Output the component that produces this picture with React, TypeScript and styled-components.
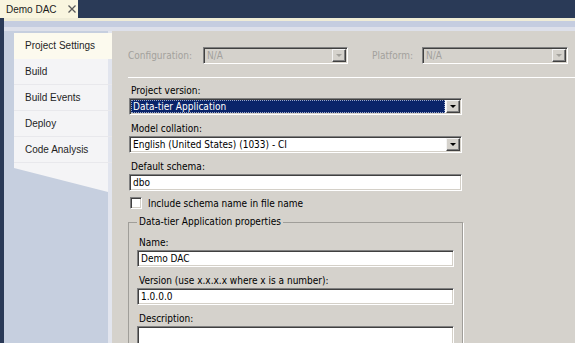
import styled, { createGlobalStyle } from "styled-components";

const GlobalStyle = createGlobalStyle`
  html, body {
    margin: 0;
    padding: 0;
    background: #2a3a57;
  }
`;

const sunken = `
  box-sizing: border-box;
  border: 1px solid;
  border-color: #808080 #ffffff #ffffff #808080;
  box-shadow: inset 1px 1px 0 #404040, inset -1px -1px 0 #d4d0c8;
`;

const Window = styled.div`
  width: 575px;
  height: 343px;
  overflow: hidden;
  display: flex;
  flex-direction: column;
  background: #2a3a57;
  font-family: Tahoma, "DejaVu Sans Condensed", "Liberation Sans", sans-serif;
  font-size: 10px;
  color: #000;
`;

const TabStrip = styled.div`
  height: 18px;
  flex-shrink: 0;
  display: flex;
`;

const DocTab = styled.div`
  width: 78px;
  box-sizing: border-box;
  display: flex;
  align-items: center;
  gap: 11px;
  padding-left: 6px;
  white-space: nowrap;
  background: #f9f5df;
  color: #1b1b1b;
  font-family: "Liberation Sans", sans-serif;
  font-size: 10px;
`;

const DocFrame = styled.div`
  flex: 1;
  min-height: 0;
  margin-left: 4px;
  display: flex;
  flex-direction: column;
`;

const Band = styled.div`
  height: 13px;
  flex-shrink: 0;
  background: linear-gradient(
    to bottom,
    #efecd7 0 3px,
    #c5cde0 3px 9px,
    #dde0ea 9px 13px
  );
`;

const Body = styled.div`
  flex: 1;
  min-height: 0;
  display: flex;
`;

const LeftPane = styled.div`
  width: 108px;
  flex-shrink: 0;
  box-sizing: border-box;
  padding: 2px 0 0 10px;
  background: linear-gradient(to right, #c6cfdf 104px, #e2e5ee 104px);
`;

const TabList = styled.ul`
  list-style: none;
  margin: 0;
  padding: 0;
  height: 160px;
  display: flex;
  flex-direction: column;
  clip-path: polygon(0 0, 100% 0, 100% 100%, 0 135px);
  background: linear-gradient(to right, #f4f4f6 94px, #e2e5ee 94px);
`;

const TabItem = styled.li<{ $active?: boolean }>`
  height: 26px;
  box-sizing: border-box;
  display: flex;
  align-items: center;
  padding-left: 11px;
  font-family: "Liberation Sans", sans-serif;
  font-size: 10px;
  color: #1e1e1e;
  border-bottom: 1px solid ${(p) => (p.$active ? "transparent" : "#e8e8ec")};
  background: ${(p) =>
    p.$active
      ? "#fcfaee"
      : "linear-gradient(to right, #f4f4f6 94px, #e2e5ee 94px)"};
`;

const Content = styled.div`
  flex: 1;
  background: #d5d2cc;
  box-sizing: border-box;
  padding: 16px 0 0 16px;
  display: flex;
  flex-direction: column;
`;

const ConfigRow = styled.div`
  height: 17px;
  display: flex;
  align-items: center;
`;

const ConfigLabel = styled.span<{ $w: number; $ml?: number }>`
  width: ${(p) => p.$w}px;
  margin-left: ${(p) => p.$ml ?? 0}px;
  color: #a3a19c;
`;

const Separator = styled.div`
  margin: 13px 0 4px 0;
  height: 1px;
  background: #a09e99;
  border-bottom: 1px solid #ffffff;
`;

const Form = styled.div`
  width: 333px;
  margin-left: 1px;
  display: flex;
  flex-direction: column;
`;

const Field = styled.div`
  display: flex;
  flex-direction: column;
  margin-bottom: 5px;
`;

const FieldLabel = styled.div`
  height: 16px;
  line-height: 17px;
  padding-left: 2px;
`;

const Combo = styled.div<{ $w?: number; $disabled?: boolean }>`
  ${sunken}
  width: ${(p) => (p.$w ? `${p.$w}px` : "100%")};
  height: 17px;
  padding: 1px;
  display: flex;
  background: ${(p) => (p.$disabled ? "#d5d2cc" : "#ffffff")};
  color: ${(p) => (p.$disabled ? "#a3a19c" : "#000")};
`;

const ComboValue = styled.div<{ $selected?: boolean }>`
  flex: 1;
  display: flex;
  align-items: center;
  padding-left: 2px;
  margin-right: 1px;
  white-space: nowrap;
  overflow: hidden;
  background: ${(p) => (p.$selected ? "#0a246a" : "transparent")};
  color: ${(p) => (p.$selected ? "#ffffff" : "inherit")};
  outline: ${(p) => (p.$selected ? "1px dotted #9aa6c8" : "none")};
  outline-offset: -1px;
`;

const DropButton = styled.div<{ $disabled?: boolean }>`
  width: 14px;
  box-sizing: border-box;
  display: flex;
  align-items: center;
  justify-content: center;
  background: #d5d2cc;
  border: 1px solid;
  border-color: #f4f4f4 #404040 #404040 #f4f4f4;
  box-shadow: inset -1px -1px 0 #808080;

  &::after {
    content: "";
    border-left: 3px solid transparent;
    border-right: 3px solid transparent;
    border-top: 3px solid ${(p) => (p.$disabled ? "#a3a19c" : "#000")};
  }
`;

const TextBox = styled.div<{ $h?: number }>`
  ${sunken}
  height: ${(p) => p.$h ?? 17}px;
  background: #ffffff;
  padding: 0 3px;
  display: flex;
  align-items: ${(p) => (p.$h ? "flex-start" : "center")};
`;

const CheckRow = styled.label`
  margin-top: 1px;
  height: 12px;
  display: flex;
  align-items: center;
  gap: 6px;
  padding-left: 1px;
`;

const CheckBox = styled.span`
  ${sunken}
  width: 12px;
  height: 12px;
  background: #ffffff;
`;

const Group = styled.fieldset`
  margin: 6px 0 0 -1px;
  width: 335px;
  box-sizing: border-box;
  padding: 5px 8px 0 8px;
  border: 1px solid #a09e99;
  box-shadow: 1px 1px 0 #ffffff;
`;

const GroupTitle = styled.legend`
  padding: 0 2px;
  line-height: 14px;
`;

function Combobox({
  value,
  width,
  disabled,
  selected,
}: {
  value: string;
  width?: number;
  disabled?: boolean;
  selected?: boolean;
}) {
  return (
    <Combo $w={width} $disabled={disabled}>
      <ComboValue $selected={selected}>{value}</ComboValue>
      <DropButton $disabled={disabled} />
    </Combo>
  );
}

const tabs = ["Project Settings", "Build", "Build Events", "Deploy", "Code Analysis"];

export default function App() {
  return (
    <Window>
      <GlobalStyle />
      <TabStrip>
        <DocTab>
          Demo DAC
          <svg width="8" height="8" viewBox="0 0 8 8">
            <path d="M0.5 0.5 L7.5 7.5 M7.5 0.5 L0.5 7.5" stroke="#5a5a5a" strokeWidth="1.3" />
          </svg>
        </DocTab>
      </TabStrip>
      <DocFrame>
        <Band />
        <Body>
          <LeftPane>
            <TabList>
              {tabs.map((t, i) => (
                <TabItem key={t} $active={i === 0}>
                  {t}
                </TabItem>
              ))}
            </TabList>
          </LeftPane>
          <Content>
            <ConfigRow>
              <ConfigLabel $w={75}>Configuration:</ConfigLabel>
              <Combobox value="N/A" width={145} disabled />
              <ConfigLabel $w={50} $ml={24}>
                Platform:
              </ConfigLabel>
              <Combobox value="N/A" width={146} disabled />
            </ConfigRow>
            <Separator />
            <Form>
              <Field>
                <FieldLabel>Project version:</FieldLabel>
                <Combobox value="Data-tier Application" selected />
              </Field>
              <Field>
                <FieldLabel>Model collation:</FieldLabel>
                <Combobox value="English (United States) (1033) - CI" />
              </Field>
              <Field>
                <FieldLabel>Default schema:</FieldLabel>
                <TextBox>dbo</TextBox>
              </Field>
              <CheckRow>
                <CheckBox />
                Include schema name in file name
              </CheckRow>
              <Group>
                <GroupTitle>Data-tier Application properties</GroupTitle>
                <Field>
                  <FieldLabel>Name:</FieldLabel>
                  <TextBox>Demo DAC</TextBox>
                </Field>
                <Field>
                  <FieldLabel>Version (use x.x.x.x where x is a number):</FieldLabel>
                  <TextBox>1.0.0.0</TextBox>
                </Field>
                <Field>
                  <FieldLabel>Description:</FieldLabel>
                  <TextBox $h={40} />
                </Field>
              </Group>
            </Form>
          </Content>
        </Body>
      </DocFrame>
    </Window>
  );
}
